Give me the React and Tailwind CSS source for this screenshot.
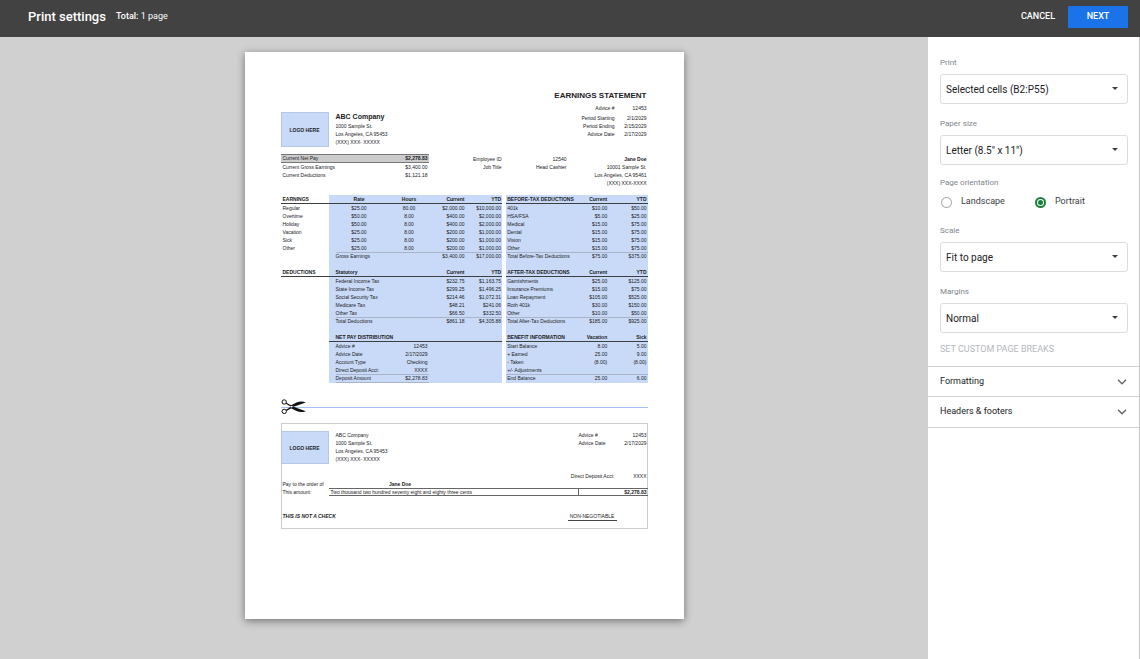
import React, { useState } from 'react';
import clsx from 'clsx';

const EARNINGS = [
    ['Regular', '$25.00', '80.00', '$2,000.00', '$10,000.00'],
    ['Overtime', '$50.00', '8.00', '$400.00', '$2,000.00'],
    ['Holiday', '$50.00', '8.00', '$400.00', '$2,000.00'],
    ['Vacation', '$25.00', '8.00', '$200.00', '$1,000.00'],
    ['Sick', '$25.00', '8.00', '$200.00', '$1,000.00'],
    ['Other', '$25.00', '8.00', '$200.00', '$1,000.00']
];

const TAXES = [
    ['Federal Income Tax', '$232.75', '$1,163.75'],
    ['State Income Tax', '$299.25', '$1,496.25'],
    ['Social Security Tax', '$214.46', '$1,072.31'],
    ['Medicare Tax', '$48.21', '$241.06'],
    ['Other Tax', '$66.50', '$332.50']
];

const DISTRIBUTION = [
    ['Advice #', '12453'],
    ['Advice Date', '2/17/2029'],
    ['Account Type', 'Checking'],
    ['Direct Deposit Acct:', 'XXXX']
];

const RIGHT_SECTIONS = [
    {
        head: ['BEFORE-TAX DEDUCTIONS', 'Current', 'YTD'],
        rows: [
            ['401k', '$10.00', '$50.00'],
            ['HSA/FSA', '$5.00', '$25.00'],
            ['Medical', '$15.00', '$75.00'],
            ['Dental', '$15.00', '$75.00'],
            ['Vision', '$15.00', '$75.00'],
            ['Other', '$15.00', '$75.00']
        ],
        total: ['Total Before-Tax Deductions', '$75.00', '$375.00']
    },
    {
        head: ['AFTER-TAX DEDUCTIONS', 'Current', 'YTD'],
        rows: [
            ['Garnishments', '$25.00', '$125.00'],
            ['Insurance Premiums', '$15.00', '$75.00'],
            ['Loan Repayment', '$105.00', '$525.00'],
            ['Roth 401k', '$30.00', '$150.00'],
            ['Other', '$10.00', '$50.00']
        ],
        total: ['Total After-Tax Deductions', '$185.00', '$925.00']
    },
    {
        head: ['BENEFIT INFORMATION', 'Vacation', 'Sick'],
        rows: [
            ['Start Balance', '8.00', '5.00'],
            ['+ Earned', '25.00', '9.00'],
            ['- Taken', '(8.00)', '(8.00)'],
            ['+/- Adjustments', '', '']
        ],
        total: ['End Balance', '25.00', '6.00']
    }
];

const HEAD = 'border-b border-[#3c4043] leading-[8px] font-bold';
const TOTAL = 'border-t border-[#a9b4c8] leading-[7px]';
const BLUE = 'bg-[#c9daf8]';

const Cell = ({ as: Tag = 'td', className, ...props }) => (
    <Tag className={clsx('p-0 whitespace-nowrap', className)} {...props} />
);

const Spacer = ({ span, label }) => (
    <tr>
        {label && <Cell />}
        <Cell colSpan={span} className={clsx('h-2', BLUE)} />
    </tr>
);

const EarningsTable = () => (
    <table className="w-[60.4%] table-fixed border-separate border-spacing-0 text-left">
        <colgroup>
            <col className="w-[48px]" />
            <col className="w-[7px]" />
            <col className="w-[54px]" />
            <col className="w-[39px]" />
            <col className="w-[37px]" />
            <col />
        </colgroup>
        <tbody>
            <tr>
                <Cell as="th" className={clsx(HEAD, 'pl-[2px]')}>EARNINGS</Cell>
                <Cell as="th" colSpan={2} className={clsx(HEAD, BLUE, 'text-center')}>Rate</Cell>
                <Cell as="th" className={clsx(HEAD, BLUE, 'text-center')}>Hours</Cell>
                <Cell as="th" className={clsx(HEAD, BLUE, 'pr-px text-right')}>Current</Cell>
                <Cell as="th" className={clsx(HEAD, BLUE, 'pr-px text-right')}>YTD</Cell>
            </tr>
            {EARNINGS.map(([name, rate, hours, current, ytd]) => (
                <tr key={name}>
                    <Cell className="pl-[2px]">{name}</Cell>
                    <Cell colSpan={2} className={clsx(BLUE, 'text-center')}>{rate}</Cell>
                    <Cell className={clsx(BLUE, 'text-center')}>{hours}</Cell>
                    <Cell className={clsx(BLUE, 'pr-px text-right')}>{current}</Cell>
                    <Cell className={clsx(BLUE, 'pr-px text-right')}>{ytd}</Cell>
                </tr>
            ))}
            <tr>
                <Cell />
                <Cell className={BLUE} />
                <Cell colSpan={2} className={clsx(TOTAL, BLUE)}>Gross Earnings</Cell>
                <Cell className={clsx(TOTAL, BLUE, 'pr-px text-right')}>$3,400.00</Cell>
                <Cell className={clsx(TOTAL, BLUE, 'pr-px text-right')}>$17,000.00</Cell>
            </tr>
            <Spacer span={5} label />

            <tr>
                <Cell as="th" className={clsx(HEAD, 'pl-[2px]')}>DEDUCTIONS</Cell>
                <Cell className={clsx(HEAD, BLUE)} />
                <Cell as="th" colSpan={2} className={clsx(HEAD, BLUE)}>Statutory</Cell>
                <Cell as="th" className={clsx(HEAD, BLUE, 'pr-px text-right')}>Current</Cell>
                <Cell as="th" className={clsx(HEAD, BLUE, 'pr-px text-right')}>YTD</Cell>
            </tr>
            {TAXES.map(([name, current, ytd]) => (
                <tr key={name}>
                    <Cell />
                    <Cell className={BLUE} />
                    <Cell colSpan={2} className={BLUE}>{name}</Cell>
                    <Cell className={clsx(BLUE, 'pr-px text-right')}>{current}</Cell>
                    <Cell className={clsx(BLUE, 'pr-px text-right')}>{ytd}</Cell>
                </tr>
            ))}
            <tr>
                <Cell />
                <Cell className={BLUE} />
                <Cell colSpan={2} className={clsx(TOTAL, BLUE)}>Total Deductions</Cell>
                <Cell className={clsx(TOTAL, BLUE, 'pr-px text-right')}>$861.18</Cell>
                <Cell className={clsx(TOTAL, BLUE, 'pr-px text-right')}>$4,305.88</Cell>
            </tr>
            <Spacer span={5} label />

            <tr>
                <Cell />
                <Cell className={clsx(HEAD, BLUE)} />
                <Cell as="th" colSpan={4} className={clsx(HEAD, BLUE)}>NET PAY DISTRIBUTION</Cell>
            </tr>
            {DISTRIBUTION.map(([name, value]) => (
                <tr key={name}>
                    <Cell />
                    <Cell className={BLUE} />
                    <Cell className={BLUE}>{name}</Cell>
                    <Cell className={clsx(BLUE, 'pr-px text-right')}>{value}</Cell>
                    <Cell colSpan={2} className={BLUE} />
                </tr>
            ))}
            <tr>
                <Cell />
                <Cell className={BLUE} />
                <Cell className={clsx(TOTAL, BLUE, 'border-b')}>Deposit Amount</Cell>
                <Cell className={clsx(TOTAL, BLUE, 'border-b pr-px text-right')}>$2,278.83</Cell>
                <Cell colSpan={2} className={BLUE} />
            </tr>
        </tbody>
    </table>
);

const DeductionsTable = () => (
    <table className={clsx('w-[38.5%] table-fixed border-separate border-spacing-0 pb-px text-left', BLUE)}>
        <colgroup>
            <col className="w-[71px]" />
            <col className="w-[31px]" />
            <col />
        </colgroup>
        {RIGHT_SECTIONS.map(({ head, rows, total }, i) => (
            <tbody key={head[0]}>
                {i > 0 && <Spacer span={3} />}
                <tr>
                    {head.map((text, c) => (
                        <Cell key={text} as="th" className={clsx(HEAD, c ? 'pr-px text-right' : 'pl-px')}>{text}</Cell>
                    ))}
                </tr>
                {rows.map((row) => (
                    <tr key={row[0]}>
                        {row.map((text, c) => (
                            <Cell key={c} className={c ? 'pr-px text-right' : 'pl-px'}>{text}</Cell>
                        ))}
                    </tr>
                ))}
                <tr>
                    {total.map((text, c) => (
                        <Cell key={c} className={clsx(TOTAL, c ? 'pr-px text-right' : 'pl-px')}>{text}</Cell>
                    ))}
                </tr>
            </tbody>
        ))}
    </table>
);

const Logo = ({ className }) => (
    <div className={clsx('flex w-12 items-center justify-center border border-[#b7c6e4] bg-[#c9daf8] font-bold', className)}>
        LOGO HERE
    </div>
);

const Scissors = () => (
    <svg viewBox="0 0 25 16" className="absolute top-0 left-0 h-4 w-[25px]" fill="none" stroke="#111">
        <circle cx="3.2" cy="3" r="2.2" strokeWidth="1" />
        <circle cx="3.2" cy="12.4" r="2.2" strokeWidth="1" />
        <path d="M5.2 4.2 10 7M5.2 11.4 10 8.6" strokeWidth="1.3" />
        <path d="M8.5 6.2 24.8 12.2Q20 14 15.5 12L8.5 8.4ZM8.5 9.2 24.8 3.4Q20 1.6 15.5 3.6L8.5 7Z" fill="#111" stroke="none" />
    </svg>
);

const Statement = () => (
    <article className="w-full max-w-[439px] bg-white px-9 pt-[39px] pb-[90px] font-['Liberation_Sans',Arial,sans-serif] text-[5px] leading-[8px] text-[#202124] shadow-[0_2px_8px_rgba(0,0,0,0.45)]">
        <header className="flex justify-between">
            <div className="flex gap-[7px] pt-[21px]">
                <Logo className="h-[35px]" />
                <div>
                    <h2 className="text-[7px] leading-[10px] font-bold">ABC Company</h2>
                    <p>1000 Sample St.</p>
                    <p>Los Angeles, CA 95453</p>
                    <p>(XXX) XXX- XXXXX</p>
                </div>
            </div>
            <div className="pr-px text-right">
                <h1 className="mb-1 text-[8px] leading-[9px] font-bold">EARNINGS STATEMENT</h1>
                <dl className="grid grid-cols-[1fr_32px]">
                    <dt className="mb-[2px]">Advice #</dt>
                    <dd>12453</dd>
                    <dt>Period Starting</dt>
                    <dd>2/1/2029</dd>
                    <dt>Period Ending</dt>
                    <dd>2/15/2029</dd>
                    <dt>Advice Date</dt>
                    <dd>2/17/2029</dd>
                </dl>
            </div>
        </header>

        <section className="mt-[7px] flex">
            <dl className="w-[148px]">
                <div className="flex justify-between border-y border-[#777] bg-[#cccccc] pr-px pl-[2px] leading-[7px]">
                    <dt>Current Net Pay</dt>
                    <dd className="font-bold">$2,278.83</dd>
                </div>
                <div className="flex justify-between pr-px pl-[2px]">
                    <dt>Current Gross Earnings</dt>
                    <dd>$3,400.00</dd>
                </div>
                <div className="flex justify-between pr-px pl-[2px]">
                    <dt>Current Deductions</dt>
                    <dd>$1,121.18</dd>
                </div>
            </dl>
            <dl className="ml-auto grid grid-cols-[1fr_65px] content-start pt-px text-right">
                <dt>Employee ID</dt>
                <dd>12540</dd>
                <dt>Job Title</dt>
                <dd>Head Cashier</dd>
            </dl>
            <address className="w-[81px] pt-px pr-px text-right not-italic">
                <p className="font-bold">Jane Doe</p>
                <p>10001 Sample St.</p>
                <p>Los Angeles, CA 95461</p>
                <p>(XXX) XXX-XXXX</p>
            </address>
        </section>

        <section className="mt-2 flex items-start justify-between">
            <EarningsTable />
            <DeductionsTable />
        </section>

        <div className="relative mt-4 flex h-4 items-center">
            <hr className="w-full border-[#a4c2f4]" />
            <Scissors />
        </div>

        <section className="mt-2 py-2 ring-1 ring-[#cccccc] ring-inset">
            <div className="flex justify-between pr-px">
                <div className="flex gap-[7px]">
                    <Logo className="h-[33px]" />
                    <div>
                        <p>ABC Company</p>
                        <p>1000 Sample St.</p>
                        <p>Los Angeles, CA 95453</p>
                        <p>(XXX) XXX- XXXXX</p>
                    </div>
                </div>
                <dl className="grid w-[68px] grid-cols-2 content-start">
                    <dt>Advice #</dt>
                    <dd className="text-right">12453</dd>
                    <dt>Advice Date</dt>
                    <dd className="text-right">2/17/2029</dd>
                </dl>
            </div>
            <dl className="mt-2 flex justify-end pr-px text-right">
                <dt>Direct Deposit Acct:</dt>
                <dd className="w-8">XXXX</dd>
            </dl>
            <div className="flex">
                <span className="w-12 pl-[2px]">Pay to the order of</span>
                <span className="w-[143px] text-center font-bold">Jane Doe</span>
            </div>
            <div className="flex">
                <span className="w-12 pl-[2px]">This amount:</span>
                <div className="flex flex-1 border-y border-[#666] leading-[6px]">
                    <span className="flex-1 pl-[2px]">Two thousand two hundred seventy eight and eighty three cents</span>
                    <span className="w-[70px] border-l border-[#666] pr-px text-right font-bold">$2,278.83</span>
                </div>
            </div>
            <div className="mt-4 flex items-start justify-between pr-[31px]">
                <em className="pl-[2px] font-bold">THIS IS NOT A CHECK</em>
                <span className="w-[49px] border-b border-[#444] text-center">NON-NEGOTIABLE</span>
            </div>
        </section>
    </article>
);

const SelectField = ({ id, label, options }) => (
    <div className="mb-3">
        <label htmlFor={id} className="block text-[8px] leading-[16px] text-[#80868b]">{label}</label>
        <div className="relative mt-[3px]">
            <select
                id={id}
                className="h-[30px] w-full appearance-none rounded-[3px] border border-[#dadce0] bg-white pl-[5px] text-[10px] text-[#202124]"
            >
                {options.map((option) => <option key={option}>{option}</option>)}
            </select>
            <svg viewBox="0 0 6 3" className="pointer-events-none absolute top-[13px] right-[10px] h-[3px] w-[6px]">
                <path d="M0 0h6L3 3z" fill="#3c4043" />
            </svg>
        </div>
    </div>
);

const Radio = ({ label, checked, onChange }) => (
    <label className="flex flex-1 items-center gap-2 text-[9px] text-[#3c4043]">
        <input
            type="radio"
            name="orientation"
            checked={checked}
            onChange={onChange}
            className="m-px h-[11px] w-[11px] appearance-none rounded-full border border-[#9aa0a6] checked:border-2 checked:border-[#188038] checked:bg-[#188038] checked:bg-clip-content checked:p-px"
        />
        {label}
    </label>
);

const PanelRow = ({ title }) => (
    <button type="button" className="flex h-[30px] w-full items-center justify-between pr-3 pl-3 text-[9px] text-[#202124]">
        {title}
        <svg viewBox="0 0 10 6" className="h-[6px] w-[10px]" fill="none" stroke="#5f6368" strokeWidth="1.3">
            <path d="M1 .8 5 4.8 9 .8" />
        </svg>
    </button>
);

const Sidebar = () => {
    const [orientation, setOrientation] = useState('Portrait');

    return (
        <aside className="w-[212px] flex-shrink-0 border-r border-[#c4c4c4] bg-white pt-[18px]">
            <div className="pr-[11px] pl-3">
                <SelectField id="print" label="Print" options={['Selected cells (B2:P55)', 'Current sheet', 'Workbook']} />
                <SelectField id="paper" label="Paper size" options={['Letter (8.5" x 11")', 'A4']} />
                <fieldset className="-mt-[2px] mb-[10px]">
                    <legend className="text-[8px] leading-[16px] text-[#80868b]">Page orientation</legend>
                    <div className="flex h-[22px] items-center">
                        <Radio
                            label="Landscape"
                            checked={orientation === 'Landscape'}
                            onChange={() => setOrientation('Landscape')}
                        />
                        <Radio
                            label="Portrait"
                            checked={orientation === 'Portrait'}
                            onChange={() => setOrientation('Portrait')}
                        />
                    </div>
                </fieldset>
                <SelectField id="scale" label="Scale" options={['Fit to page', 'Fit to width', 'Fit to height']} />
                <SelectField id="margins" label="Margins" options={['Normal', 'Narrow', 'Wide']} />
                <button type="button" className="-mt-1 mb-[9px] block text-[9px] leading-[16px] text-[#b5b8bc]">
                    SET CUSTOM PAGE BREAKS
                </button>
            </div>
            <div className="divide-y divide-[#d0d2d5] border-y border-[#d0d2d5]">
                <PanelRow title="Formatting" />
                <PanelRow title="Headers & footers" />
            </div>
        </aside>
    );
};

const App = () => {
    return (
        <div className="flex min-h-screen flex-col bg-[#d0d0d0] font-[Roboto,sans-serif]">
            <header className="flex h-[37px] items-center bg-[#424242] pr-3 pb-1 pl-7 text-white">
                <h1 className="text-[13px] font-medium">Print settings</h1>
                <p className="ml-[10px] text-[9px]"><span className="font-medium">Total:</span> 1 page</p>
                <button type="button" className="ml-auto px-[13px] text-[9px] font-medium">CANCEL</button>
                <button type="button" className="h-[22px] w-[60px] rounded-[1px] bg-[#1a73e8] text-[9px] font-medium">NEXT</button>
            </header>
            <div className="flex flex-1">
                <main className="flex flex-1 items-start justify-center pt-[15px] pb-10">
                    <Statement />
                </main>
                <Sidebar />
            </div>
        </div>
    );
};

export default App;
